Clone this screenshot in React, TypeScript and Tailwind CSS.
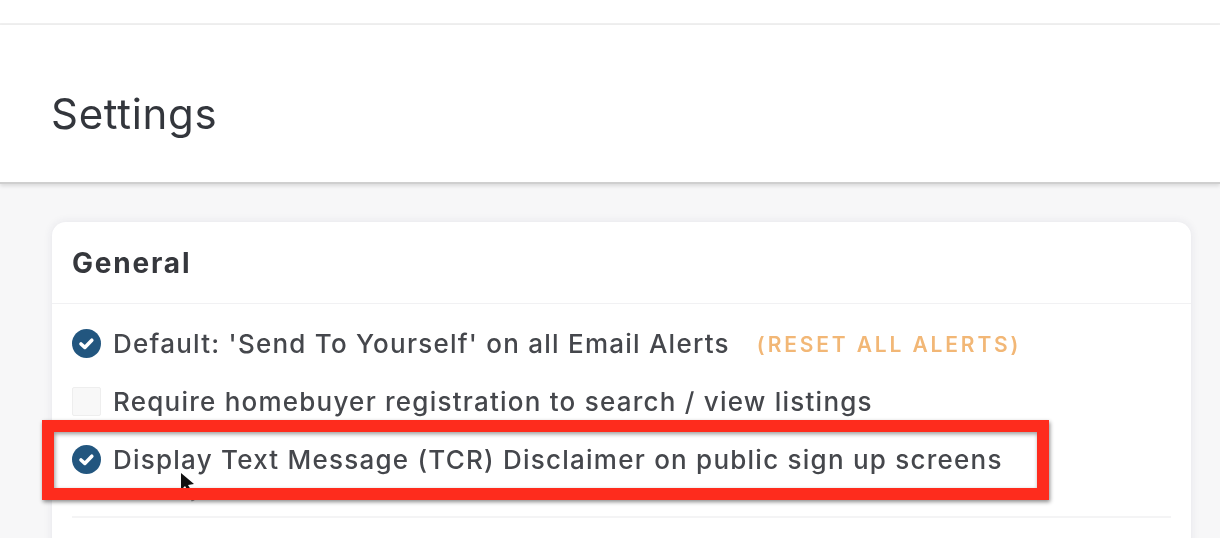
import { ReactNode } from "react";

function CheckedIcon() {
  return (
    <svg viewBox="0 0 29 29" className="size-[29px] shrink-0">
      <circle cx="14.5" cy="14.5" r="14.5" fill="#22567f" />
      <path d="M9 15l3.8 3.4 7-7.2" fill="none" stroke="#fff" strokeWidth="3.6" strokeLinecap="round" strokeLinejoin="round" />
    </svg>
  );
}

function SettingRow({ checked, children }: { checked: boolean; children: ReactNode }) {
  return (
    <div className="flex h-[58px] items-center gap-[12px]">
      {checked ? (
        <CheckedIcon />
      ) : (
        <div className="size-[29px] shrink-0 rounded-[2px] border border-[#eeeeee] bg-[#f8f8f8]" />
      )}
      <span className="text-[26px] font-medium tracking-[1.23px] text-[#45474c]">{children}</span>
    </div>
  );
}

export default function App() {
  return (
    <div className="relative h-[538px] w-[1220px] overflow-hidden bg-[#f7f7f8] font-['Inter',sans-serif]">
      <div className="blur-[0.7px]">
        <div className="h-[25px] border-b-2 border-[#f0f0f0] bg-white" />
        <header className="flex h-[159px] items-center border-b-2 border-[#cfcfcf] bg-white pl-[51px] pt-[21px] shadow-[0_2px_4px_rgba(0,0,0,0.12)]">
          <h1 className="text-[42px] leading-none tracking-[0.7px] text-[#33363c]">Settings</h1>
        </header>
        <section className="mx-[52px] mt-[38px] h-[340px] w-[1139px] rounded-t-[14px] bg-white shadow-[0_0_10px_rgba(40,40,90,0.09)]">
          <div className="flex h-[82px] items-center border-b border-[#f1f1f3] pl-[20px]">
            <h2 className="text-[28px] font-bold tracking-[1.8px] text-[#35373c]">General</h2>
          </div>
          <div className="px-[20px] pt-[10px]">
            <SettingRow checked>
              Default: 'Send To Yourself' on all Email Alerts
              <span className="relative top-[-1px] ml-[27px] text-[21px] font-semibold tracking-[2.85px] text-[#f2b776]">(RESET ALL ALERTS)</span>
            </SettingRow>
            <SettingRow checked={false}>Require homebuyer registration to search / view listings</SettingRow>
            <SettingRow checked>Display Text Message (TCR) Disclaimer on public sign up screens</SettingRow>
            <div className="mt-[28px] border-b-2 border-[#f4f4f5]" />
          </div>
        </section>
      </div>

      {/* annotation drawn over the screenshot */}
      <svg viewBox="0 0 20 34" className="absolute left-[178px] top-[470px] h-[34px] w-[20px]">
        <path d="M3 3l0 17 4-4 3 5 3-1-3-5 6-1z" fill="#111" />
        <path d="M13 25l2 6" stroke="#9a9a9a" strokeWidth="3" fill="none" />
      </svg>
      <div className="absolute left-[42px] top-[420px] h-[80px] w-[1007px] border-[12px] border-[#fe2c1d] shadow-[1px_2px_4px_rgba(0,0,0,0.45),inset_1px_2px_4px_rgba(0,0,0,0.4)]" />
    </div>
  );
}
